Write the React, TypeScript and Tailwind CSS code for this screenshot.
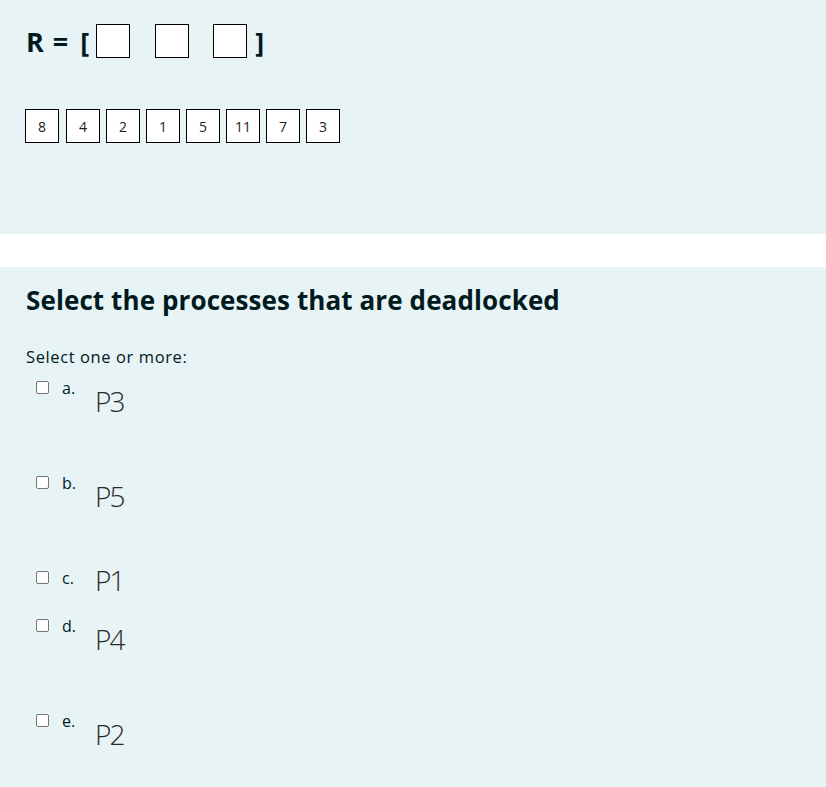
import React from "react";

const nums = [8, 4, 2, 1, 5, 11, 7, 3];

function Box() {
  return <span className="inline-block w-[34px] h-[34px] bg-white border border-black" />;
}

function Check() {
  return <span className="mt-[5px] inline-block w-[13px] h-[13px] shrink-0 rounded-[2px] border border-[#767676] bg-white" />;
}

const opts: { l: string; v: string; h: string; p: boolean }[] = [
  { l: "a.", v: "P3", h: "h-[95px]", p: true },
  { l: "b.", v: "P5", h: "h-[95px]", p: true },
  { l: "c.", v: "P1", h: "h-[48px]", p: false },
  { l: "d.", v: "P4", h: "h-[95px]", p: true },
  { l: "e.", v: "P2", h: "h-[80px]", p: true },
];

export default function App() {
  return (
    <div className="w-[826px] min-h-[787px] bg-white text-[#001a1e]" style={{ fontFamily: '"Open Sans", "Noto Sans", sans-serif' }}>
      <div className="h-[234px] bg-[#e7f3f5] pt-[24px] pl-[26px]">
        <div className="flex items-center h-[34px] text-[27px] font-bold leading-none">
          <span>R</span>
          <span className="ml-[9px]">=</span>
          <span className="ml-[12px]">[</span>
          <span className="ml-[7px] flex"><Box /></span>
          <span className="ml-[25px] flex"><Box /></span>
          <span className="ml-[24px] flex"><Box /></span>
          <span className="ml-[8px]">]</span>
        </div>
        <div className="mt-[51px] ml-[-1px] flex gap-[6px]">
          {nums.map((n, i) => (
            <span
              key={i}
              className={`w-[34px] h-[34px] bg-white border border-black flex items-center justify-center text-[14px] text-[#1d2125] ${i === 1 ? "ml-[1px]" : ""}`}
            >
              {n}
            </span>
          ))}
        </div>
      </div>
      <div className="h-[33px] bg-white" />
      <div className="bg-[#e7f3f5] min-h-[520px] pl-[26px]">
        <div className="pt-[16px] text-[26px] font-bold leading-[34px] tracking-[0.1px]">Select the processes that are deadlocked</div>
        <div className="mt-[28px] text-[16.5px] leading-[24px] tracking-[0.6px]">Select one or more:</div>
        <div className="mt-[7px]">
          {opts.map((o) => (
            <div key={o.l} className={`flex items-start pl-[10px] ${o.h}`}>
              <Check />
              <span className="ml-[13px] w-[35px] text-[16px] leading-[24px]">{o.l}</span>
              <span className={`ml-[-2px] text-[28px] font-light leading-[28px] text-[#2b2b2b] tracking-[-2px] ${o.p ? "mt-[11px]" : ""}`}>{o.v}</span>
            </div>
          ))}
        </div>
      </div>
    </div>
  );
}
